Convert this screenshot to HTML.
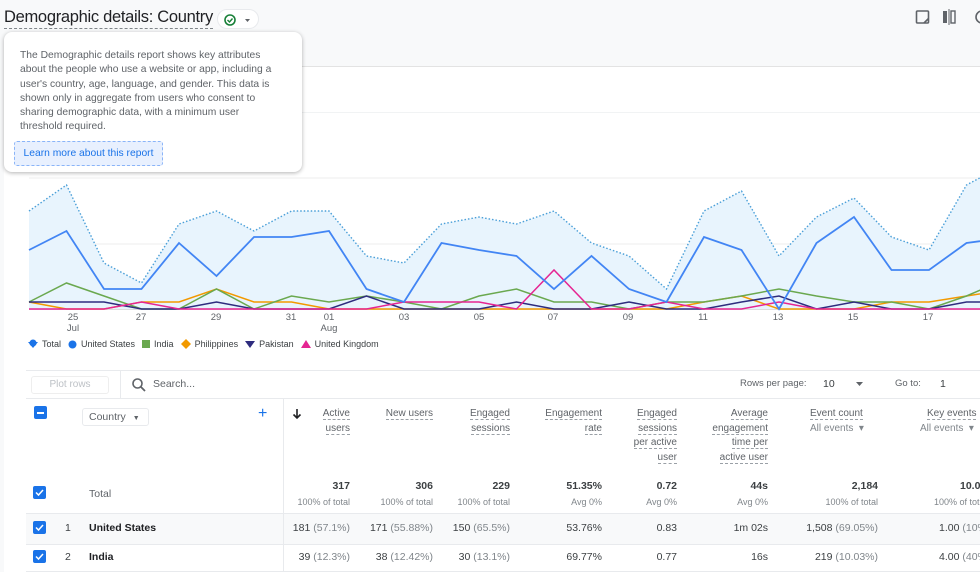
<!DOCTYPE html>
<html><head><meta charset="utf-8"><style>
*{box-sizing:border-box;margin:0;padding:0}
body{width:980px;height:572px;overflow:hidden;background:#f8f9fa;font-family:"Liberation Sans",Arial,sans-serif;color:#3c4043;position:relative}
.abs{position:absolute}
.title{left:4px;top:7px;font-size:16.5px;letter-spacing:-0.3px;color:#202124;border-bottom:1.5px dashed #80868b;line-height:21px;white-space:nowrap}
.chip{left:217px;top:9px;width:42px;height:20px;border:1px solid #e8eaed;border-radius:10px;background:#fff}
.card{left:4px;top:66px;width:976px;height:506px;background:#fff;border-top:1px solid #e3e3e3}
.tip{left:4px;top:32px;width:298px;height:140px;background:#fff;border-radius:8px;box-shadow:0 1px 4px rgba(0,0,0,.3);font-size:10.3px;line-height:14.3px;color:#5f6368;padding:17px 22px 17px 16px}
.btn{left:14px;top:141px;width:149px;height:25px;border:1px dashed #8ab4f8;background:#e8f0fe;border-radius:3px;color:#1a73e8;font-size:10.3px;line-height:24px;text-align:center}
.lbl{font-size:9.5px;color:#5f6368;text-align:center;width:30px}
.leg{left:28px;top:339px;font-size:9px;color:#3c4043;display:flex;align-items:center;white-space:nowrap}
.leg svg{margin-right:4px}
.leg span{margin-right:7px}
.t{font-size:10.5px}
.r{text-align:right}
.u{border-bottom:1px dashed #9aa0a6}
.hd{color:#5f6368;font-size:10px;line-height:14.5px}
.sub{font-size:9px;color:#80868b;white-space:nowrap}
.cb{width:13px;height:13px;background:#1a73e8;border-radius:2px}
</style></head><body>
<div class="abs title">Demographic details: Country</div>
<div class="abs chip"><svg width="42" height="20"><circle cx="12" cy="10" r="5" fill="none" stroke="#188038" stroke-width="1.6"/><path d="M9.5 10l2 2 3-3.5" fill="none" stroke="#188038" stroke-width="1.4"/><path d="M27 9h5l-2.5 3z" fill="#5f6368"/></svg></div>
<svg class="abs" style="left:913px;top:8px" width="67" height="18"><rect x="3.5" y="3" width="12" height="12" rx="1" fill="none" stroke="#5f6368" stroke-width="1.6"/><path d="M11 15l4.5-4.5" stroke="#5f6368" stroke-width="1.6"/><rect x="30" y="3" width="4" height="12" fill="#5f6368"/><rect x="38" y="3" width="4" height="12" fill="none" stroke="#5f6368" stroke-width="1.4"/><path d="M36 1v16" stroke="#5f6368" stroke-width="1"/><circle cx="69" cy="9" r="6" fill="none" stroke="#5f6368" stroke-width="1.6"/></svg>
<div class="abs card"></div>
<div class="abs" style="left:4px;top:112px;width:976px;border-top:1px solid #f1f3f4"></div>
<svg class="abs" style="left:0;top:0" width="980" height="330">
<line x1="29" y1="178" x2="980" y2="178" stroke="#eee"/><line x1="29" y1="244" x2="980" y2="244" stroke="#eee"/><line x1="29" y1="309.5" x2="980" y2="309.5" stroke="#ddd"/>
<polygon fill="#e8f4fd" points="29,309 29,211 66.5,185 104,263 141.5,283 179,224 216.5,211 254,231 291.5,211 329,211 366.5,256 404,263 441.5,224 479,217 516.5,224 554,211 591.5,243 629,256 666.5,289 704,211 741.5,191 779,256 816.5,217 854,198 891.5,237 929,250 966.5,185 1004,165 1004,309"/>
<polyline fill="none" stroke="#4a9fd8" stroke-width="1.4" stroke-dasharray="1.5 2" points="29,211 66.5,185 104,263 141.5,283 179,224 216.5,211 254,231 291.5,211 329,211 366.5,256 404,263 441.5,224 479,217 516.5,224 554,211 591.5,243 629,256 666.5,289 704,211 741.5,191 779,256 816.5,217 854,198 891.5,237 929,250 966.5,185 1004,165"/>
<polyline fill="none" stroke="#f29900" stroke-width="1.5" points="29,302 66.5,309 104,309 141.5,302 179,302 216.5,289 254,302 291.5,302 329,309 366.5,309 404,309 441.5,309 479,309 516.5,309 554,309 591.5,309 629,309 666.5,309 704,302 741.5,296 779,309 816.5,309 854,309 891.5,302 929,302 966.5,296 1004,290"/>
<polyline fill="none" stroke="#6aa84f" stroke-width="1.5" points="29,302 66.5,283 104,296 141.5,309 179,309 216.5,289 254,309 291.5,296 329,302 366.5,296 404,302 441.5,309 479,296 516.5,289 554,302 591.5,302 629,309 666.5,302 704,302 741.5,296 779,289 816.5,296 854,302 891.5,302 929,309 966.5,296 1004,280"/>
<polyline fill="none" stroke="#2e2c7e" stroke-width="1.5" points="29,302 66.5,302 104,302 141.5,309 179,309 216.5,302 254,309 291.5,309 329,309 366.5,296 404,309 441.5,309 479,309 516.5,302 554,309 591.5,309 629,302 666.5,309 704,309 741.5,302 779,296 816.5,309 854,302 891.5,309 929,309 966.5,302 1004,302"/>
<polyline fill="none" stroke="#e52592" stroke-width="1.5" points="29,309 66.5,309 104,309 141.5,302 179,309 216.5,309 254,309 291.5,309 329,309 366.5,309 404,302 441.5,302 479,302 516.5,309 554,270 591.5,309 629,309 666.5,302 704,309 741.5,309 779,302 816.5,309 854,309 891.5,309 929,309 966.5,309 1004,309"/>
<polyline fill="none" stroke="#4285f4" stroke-width="1.8" points="29,250 66.5,231 104,289 141.5,289 179,243 216.5,276 254,237 291.5,237 329,231 366.5,289 404,302 441.5,243 479,250 516.5,256 554,289 591.5,256 629,289 666.5,302 704,237 741.5,250 779,309 816.5,243 854,217 891.5,270 929,270 966.5,243 1004,238"/>
</svg>
<div class="abs tip">The Demographic details report shows key attributes about the people who use a website or app, including a user's country, age, language, and gender. This data is shown only in aggregate from users who consent to sharing demographic data, with a minimum user threshold required.</div>
<div class="abs btn">Learn more about this report</div>
<div class="abs lbl" style="left:58px;top:312px">25<br>Jul</div>
<div class="abs lbl" style="left:126px;top:312px">27</div>
<div class="abs lbl" style="left:201px;top:312px">29</div>
<div class="abs lbl" style="left:276px;top:312px">31</div>
<div class="abs lbl" style="left:314px;top:312px">01<br>Aug</div>
<div class="abs lbl" style="left:389px;top:312px">03</div>
<div class="abs lbl" style="left:464px;top:312px">05</div>
<div class="abs lbl" style="left:538px;top:312px">07</div>
<div class="abs lbl" style="left:613px;top:312px">09</div>
<div class="abs lbl" style="left:688px;top:312px">11</div>
<div class="abs lbl" style="left:763px;top:312px">13</div>
<div class="abs lbl" style="left:838px;top:312px">15</div>
<div class="abs lbl" style="left:913px;top:312px">17</div>
<div class="abs leg">
<svg width="10" height="10"><path d="M0 3h10l-5 6z" fill="#1a73e8"/><circle cx="5" cy="4" r="3.5" fill="#1a73e8"/></svg><span>Total</span>
<svg width="9" height="9"><circle cx="4.5" cy="4.5" r="4" fill="#1a73e8"/></svg><span>United States</span>
<svg width="8" height="8"><rect width="8" height="8" fill="#6aa84f"/></svg><span>India</span>
<svg width="10" height="10"><path d="M5 0l5 5-5 5-5-5z" fill="#f29900"/></svg><span>Philippines</span>
<svg width="10" height="9"><path d="M0 1h10l-5 7z" fill="#2e2c7e"/></svg><span>Pakistan</span>
<svg width="10" height="9"><path d="M0 8h10l-5-8z" fill="#e52592"/></svg><span>United Kingdom</span>
</div>
<!-- table -->
<div class="abs" style="left:26px;top:370px;width:954px;border-top:1px solid #e8eaed"></div>
<div class="abs" style="left:26px;top:398px;width:954px;border-top:1px solid #e8eaed"></div>
<div class="abs" style="left:120px;top:370px;height:28px;border-left:1px solid #e8eaed"></div>
<div class="abs" style="left:31px;top:376px;width:78px;height:18px;border:1px solid #eee;border-radius:3px;font-size:10px;color:#bdc1c6;text-align:center;line-height:16px">Plot rows</div>
<svg class="abs" style="left:131px;top:377px" width="16" height="16"><circle cx="6.5" cy="6.5" r="4.5" fill="none" stroke="#5f6368" stroke-width="1.6"/><path d="M10 10l4 4" stroke="#5f6368" stroke-width="1.8"/></svg>
<div class="abs t" style="left:153px;top:378px;color:#5f6368">Search...</div>
<div class="abs" style="left:740px;top:378px;font-size:9.5px;color:#5f6368">Rows per page:</div>
<div class="abs t" style="left:823px;top:378px">10</div>
<svg class="abs" style="left:855px;top:381px" width="10" height="6"><path d="M1 1h7l-3.5 4z" fill="#5f6368"/></svg>
<div class="abs" style="left:895px;top:378px;font-size:9.5px;color:#5f6368">Go to:</div>
<div class="abs t" style="left:940px;top:378px">1</div>
<div class="abs" style="left:283px;top:398px;height:174px;border-left:1px solid #e8eaed"></div>
<div class="abs cb" style="left:34px;top:406px"><div style="margin:5.5px 3px;height:2px;background:#fff"></div></div>
<div class="abs" style="left:82px;top:408px;width:67px;height:18px;border:1px solid #e8eaed;border-radius:3px;font-size:10.5px;color:#5f6368;padding-left:6px;line-height:16px">Country <span style="font-size:7px;margin-left:4px">▼</span></div>
<div class="abs" style="left:258px;top:405px;color:#1a73e8;font-size:16px">+</div>
<svg class="abs" style="left:292px;top:408px" width="10" height="12"><path d="M5 1v9M1.5 6.5L5 10l3.5-3.5" fill="none" stroke="#202124" stroke-width="1.6"/></svg>
<div class="abs hd r" style="left:300px;top:407px;width:50px"><span class="u">Active</span><br><span class="u">users</span></div>
<div class="abs hd r" style="left:370px;top:407px;width:63px"><span class="u">New users</span></div>
<div class="abs hd r" style="left:450px;top:407px;width:60px"><span class="u">Engaged</span><br><span class="u">sessions</span></div>
<div class="abs hd r" style="left:530px;top:407px;width:72px"><span class="u">Engagement</span><br><span class="u">rate</span></div>
<div class="abs hd r" style="left:620px;top:407px;width:57px"><span class="u">Engaged</span><br><span class="u">sessions</span><br><span class="u">per active</span><br><span class="u">user</span></div>
<div class="abs hd r" style="left:690px;top:407px;width:78px"><span class="u">Average</span><br><span class="u">engagement</span><br><span class="u">time per</span><br><span class="u">active user</span></div>
<div class="abs hd" style="left:810px;top:407px;width:80px"><span class="u">Event count</span><br><span style="font-size:10px;color:#80868b">All events &nbsp;▾</span></div>
<div class="abs hd" style="left:920px;top:407px;width:80px"><span class="u" style="margin-left:7px">Key events</span><br><span style="font-size:10px;color:#80868b">All events &nbsp;▾</span></div>
<!-- total -->
<div class="abs cb" style="left:33px;top:486px"><svg width="13" height="13"><path d="M3 6.5l2.5 2.5 4.5-5" fill="none" stroke="#fff" stroke-width="1.5"/></svg></div>
<div class="abs t" style="left:89px;top:488px;color:#5f6368">Total</div>
<div class="abs" style="left:0;top:480px;width:980px;font-size:10.5px;font-weight:bold;color:#3c4043">
<span class="abs r" style="left:250px;width:100px">317</span><span class="abs r" style="left:333px;width:100px">306</span><span class="abs r" style="left:410px;width:100px">229</span><span class="abs r" style="left:502px;width:100px">51.35%</span><span class="abs r" style="left:577px;width:100px">0.72</span><span class="abs r" style="left:668px;width:100px">44s</span><span class="abs r" style="left:778px;width:100px">2,184</span><span class="abs" style="left:960px">10.0</span></div>
<div class="abs sub" style="left:0;top:497px;width:980px">
<span class="abs r" style="left:250px;width:100px">100% of total</span><span class="abs r" style="left:333px;width:100px">100% of total</span><span class="abs r" style="left:410px;width:100px">100% of total</span><span class="abs r" style="left:502px;width:100px">Avg 0%</span><span class="abs r" style="left:577px;width:100px">Avg 0%</span><span class="abs r" style="left:668px;width:100px">Avg 0%</span><span class="abs r" style="left:778px;width:100px">100% of total</span><span class="abs" style="left:934px;white-space:nowrap">100% of tot</span></div>
<div class="abs" style="left:26px;top:513px;width:954px;height:32px;background:#f8f9fa;border-top:1px solid #e8eaed;border-bottom:1px solid #e8eaed"></div>
<div class="abs" style="left:283px;top:513px;height:59px;border-left:1px solid #e8eaed"></div>
<div class="abs" style="left:26px;top:571px;width:954px;border-top:1px solid #e8eaed"></div>
<div class="abs cb" style="left:33px;top:521px"><svg width="13" height="13"><path d="M3 6.5l2.5 2.5 4.5-5" fill="none" stroke="#fff" stroke-width="1.5"/></svg></div>
<div class="abs cb" style="left:33px;top:550px"><svg width="13" height="13"><path d="M3 6.5l2.5 2.5 4.5-5" fill="none" stroke="#fff" stroke-width="1.5"/></svg></div>
<div class="abs t" style="left:65px;top:522px">1</div>
<div class="abs t" style="left:65px;top:551px">2</div>
<div class="abs t" style="left:89px;top:522px;font-weight:bold;color:#202124">United States</div>
<div class="abs t" style="left:89px;top:551px;font-weight:bold;color:#202124">India</div>
<div class="abs t" style="left:0;top:522px;width:980px;color:#3c4043">
<span class="abs r" style="left:230px;width:120px">181 <span style="color:#80868b">(57.1%)</span></span><span class="abs r" style="left:313px;width:120px">171 <span style="color:#80868b">(55.88%)</span></span><span class="abs r" style="left:390px;width:120px">150 <span style="color:#80868b">(65.5%)</span></span><span class="abs r" style="left:502px;width:100px">53.76%</span><span class="abs r" style="left:577px;width:100px">0.83</span><span class="abs r" style="left:668px;width:100px">1m 02s</span><span class="abs r" style="left:758px;width:120px">1,508 <span style="color:#80868b">(69.05%)</span></span><span class="abs" style="left:939px;white-space:nowrap">1.00 <span style="color:#80868b">(10%)</span></span></div>
<div class="abs t" style="left:0;top:551px;width:980px;color:#3c4043">
<span class="abs r" style="left:230px;width:120px">39 <span style="color:#80868b">(12.3%)</span></span><span class="abs r" style="left:313px;width:120px">38 <span style="color:#80868b">(12.42%)</span></span><span class="abs r" style="left:390px;width:120px">30 <span style="color:#80868b">(13.1%)</span></span><span class="abs r" style="left:502px;width:100px">69.77%</span><span class="abs r" style="left:577px;width:100px">0.77</span><span class="abs r" style="left:668px;width:100px">16s</span><span class="abs r" style="left:758px;width:120px">219 <span style="color:#80868b">(10.03%)</span></span><span class="abs" style="left:939px;white-space:nowrap">4.00 <span style="color:#80868b">(40%)</span></span></div>
</body></html>
